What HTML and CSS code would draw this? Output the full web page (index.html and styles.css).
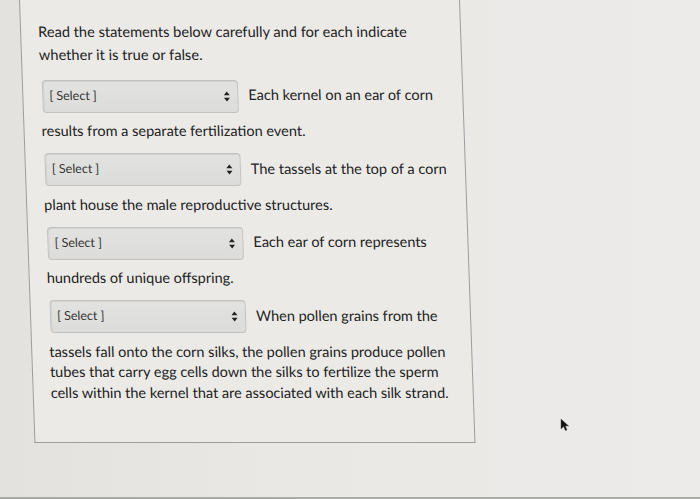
FILE: index.html
```html
<!DOCTYPE html>
<html lang="en">
<head>
<meta charset="utf-8">
<title>Quiz question</title>
<link rel="stylesheet" href="styles.css">
</head>
<body>
<div class="page">
  <div class="panel">
    <p class="intro">Read the statements below carefully and for each indicate whether it is true or false.</p>
    <p class="stmt"><span class="select"><span class="label">[ Select ]</span><svg class="arrows" width="7" height="11" viewBox="0 0 7 11"><path d="M3.5 0.5 L6.5 4.3 L0.5 4.3 Z M3.5 10.5 L6.5 6.7 L0.5 6.7 Z" fill="#222"/></svg></span>Each kernel on an ear of corn results from a separate fertilization event.</p>
    <p class="stmt"><span class="select"><span class="label">[ Select ]</span><svg class="arrows" width="7" height="11" viewBox="0 0 7 11"><path d="M3.5 0.5 L6.5 4.3 L0.5 4.3 Z M3.5 10.5 L6.5 6.7 L0.5 6.7 Z" fill="#222"/></svg></span>The tassels at the top of a corn plant house the male reproductive structures.</p>
    <p class="stmt"><span class="select"><span class="label">[ Select ]</span><svg class="arrows" width="7" height="11" viewBox="0 0 7 11"><path d="M3.5 0.5 L6.5 4.3 L0.5 4.3 Z M3.5 10.5 L6.5 6.7 L0.5 6.7 Z" fill="#222"/></svg></span>Each ear of corn represents hundreds of unique offspring.</p>
    <p class="stmt last"><span class="select"><span class="label">[ Select ]</span><svg class="arrows" width="7" height="11" viewBox="0 0 7 11"><path d="M3.5 0.5 L6.5 4.3 L0.5 4.3 Z M3.5 10.5 L6.5 6.7 L0.5 6.7 Z" fill="#222"/></svg></span>When pollen grains from the tassels fall onto the corn silks, the pollen grains produce pollen tubes that carry egg cells down the silks to fertilize the sperm cells within the kernel that are associated with each silk strand.</p>
  </div>
  <svg class="cursor" width="10" height="14" viewBox="0 0 10 14"><path d="M1 1 L1 11 L3.6 8.6 L5.4 12.6 L7 11.9 L5.3 8 L8.6 8 Z" fill="#111" stroke="#555" stroke-width="0.5"/></svg>
</div>
</body>
</html>
```

FILE: styles.css
```css
html, body {
  margin: 0;
  padding: 0;
}
body {
  background: #e7e6e3;
  font-family: Lato, "Open Sans", "Liberation Sans", sans-serif;
  color: #222;
  width: 700px;
  height: 499px;
  overflow: hidden;
}
.page {
  position: relative;
  height: 497px;
  border-bottom: 2px solid #a9a9a6;
  background: linear-gradient(90deg, #e3e2df 0%, #e9e8e5 40%, #ecebe9 100%);
}
.panel {
  margin-left: 19px;
  width: 441px;
  box-sizing: border-box;
  height: 443px;
  border: 1.5px solid #9d9d9b;
  border-top: none;
  background: #ebeae7;
  padding: 20px 10px 0 17px;
  transform: skewX(2deg);
  transform-origin: 0 0;
}
.intro {
  margin: 0 0 5px;
  font-size: 14.6px;
  line-height: 23px;
  width: 400px;
}
.stmt {
  margin: 0 0 3px;
  font-size: 14.5px;
  line-height: 20.5px;
  width: 408px;
}
.select {
  display: inline-flex;
  align-items: center;
  justify-content: space-between;
  box-sizing: border-box;
  width: 196px;
  height: 33px;
  margin: 8.5px 10px 8.5px 2px;
  padding: 0 7px 0 6px;
  vertical-align: middle;
  border: 1px solid #c2c2c0;
  border-radius: 4px;
  background: linear-gradient(180deg, #e2e2e0 0%, #dcdcda 100%);
  box-shadow: inset 1px 1px 0 #d2d2d0;
}
.label {
  font-size: 12.5px;
  color: #333;
}
.arrows {
  display: block;
}
.cursor {
  position: absolute;
  left: 560px;
  top: 418px;
}
```
